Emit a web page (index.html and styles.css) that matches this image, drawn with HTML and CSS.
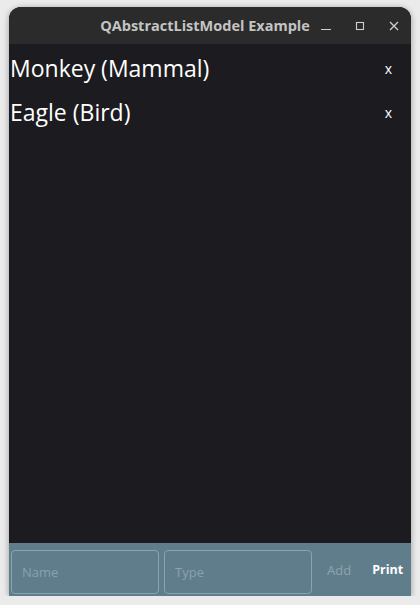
FILE: index.html
```html
<!DOCTYPE html>
<html>
<head>
  <meta charset="utf-8">
  <meta name="viewport" content="width=device-width">
  <title>QAbstractListModel Example</title>
  <link rel="stylesheet" href="styles.css">
</head>
<body>
  <div class="window">
    <header class="titlebar">
      <div class="title">QAbstractListModel Example</div>
      <div class="controls">
        <span class="ctl">
          <svg width="10" height="10" viewBox="0 0 10 10"><path d="M0 8.5h10" stroke="#cfcfcf" stroke-width="1.2"/></svg>
        </span>
        <span class="ctl">
          <svg width="10" height="10" viewBox="0 0 10 10"><rect x="1.5" y="1.5" width="7" height="7" fill="none" stroke="#cfcfcf" stroke-width="1.1"/></svg>
        </span>
        <span class="ctl">
          <svg width="10" height="10" viewBox="0 0 10 10"><path d="M1 1L9 9M9 1L1 9" stroke="#cfcfcf" stroke-width="1.3"/></svg>
        </span>
      </div>
    </header>
    <main class="list">
      <div class="item"><span class="label">Monkey (Mammal)</span><span class="remove">x</span></div>
      <div class="item"><span class="label">Eagle (Bird)</span><span class="remove">x</span></div>
    </main>
    <footer class="bar">
      <input class="field" type="text" placeholder="Name">
      <input class="field" type="text" placeholder="Type">
      <button class="btn off">Add</button>
      <button class="btn print">Print</button>
    </footer>
  </div>
</body>
</html>
```

FILE: styles.css
```css
body {
  margin: 0;
  padding: 7px 9px 0 9px;
  background-color: #ebebeb;
  font-family: "Open Sans", "DejaVu Sans", sans-serif;
}
.window {
  width: 402px;
  height: 589px;
  display: flex;
  flex-direction: column;
  border-radius: 12px 12px 0 0;
  overflow: hidden;
  box-shadow: 0 1px 6px rgba(0, 0, 0, 0.35);
  background-color: #1c1b1f;
}
.titlebar {
  height: 37px;
  flex: none;
  background-color: #2b2b2b;
  display: flex;
  align-items: center;
  position: relative;
}
.title {
  flex: 1;
  text-align: center;
  color: #c4c4c4;
  font-weight: bold;
  font-size: 14.5px;
  padding-right: 10px;
}
.controls {
  position: absolute;
  right: 7px;
  top: 0;
  height: 37px;
  display: flex;
  align-items: center;
  gap: 14px;
}
.ctl {
  width: 20px;
  height: 20px;
  display: flex;
  align-items: center;
  justify-content: center;
}
.list {
  flex: 1;
  padding-top: 2px;
}
.item {
  height: 44px;
  display: flex;
  align-items: center;
  justify-content: space-between;
  padding: 0 19px 0 1px;
}
.label {
  color: #ffffff;
  font-size: 23px;
}
.remove {
  color: #ffffff;
  font-size: 14px;
}
.bar {
  height: 53px;
  flex: none;
  background-color: #607d8b;
  display: flex;
  align-items: center;
  padding: 0 0 0 2px;
  gap: 5px;
}
.field {
  width: 148px;
  height: 44px;
  box-sizing: border-box;
  margin-top: 5px;
  background-color: #607d8b;
  border: 1px solid #8ba3ae;
  border-radius: 4px;
  padding: 0 10px;
  color: #ffffff;
  font-family: inherit;
  font-size: 13px;
}
.field::placeholder {
  color: #8aa2ad;
}
.btn {
  background: none;
  border: none;
  color: #ffffff;
  font-family: inherit;
  font-size: 13px;
  padding: 0;
  margin: 0 0 0 10px;
}
.btn.off {
  color: #8ea5b0;
}
.btn.print {
  font-weight: bold;
  font-size: 12.5px;
  margin-left: 16px;
}
```
